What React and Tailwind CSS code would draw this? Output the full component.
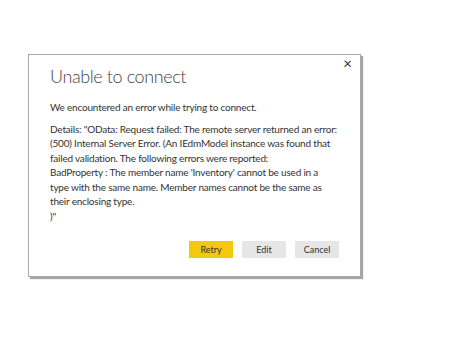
export default function App() {
  return (
    <div className="w-[474px] h-[350px] bg-white overflow-hidden font-['Lato',sans-serif]">
      <div className="relative ml-[28px] mt-[54px] w-[333px] h-[223px] bg-white border border-[#a8a8a8] shadow-[2px_2px_1px_rgba(0,0,0,0.35)] pl-[21px] pr-[20px]">
        <button className="absolute right-[8px] top-[1px] text-[#333] text-[15px] leading-none">
          ×
        </button>
        <h1 className="mt-[9px] text-[18px] font-light text-[#444] leading-[24px] tracking-[-0.4px]">
          Unable to connect
        </h1>
        <p className="mt-[12px] text-[10px] leading-[14.5px] text-[#333] whitespace-nowrap tracking-[-0.2px]">
          We encountered an error while trying to connect.
        </p>
        <p className="mt-[7px] text-[10px] leading-[14.5px] text-[#333] whitespace-nowrap tracking-[-0.2px]">
          Details: "OData: Request failed: The remote server returned an error:
          <br />
          (500) Internal Server Error. (An IEdmModel instance was found that
          <br />
          failed validation. The following errors were reported:
          <br />
          BadProperty : The member name 'Inventory' cannot be used in a
          <br />
          type with the same name. Member names cannot be the same as
          <br />
          their enclosing type.
          <br />)"
        </p>
        <div className="flex justify-end gap-[9px] mt-[18px] pr-[1px]">
          <button className="w-[44px] h-[17px] bg-[#f2c811] text-[9px] text-[#333]">
            Retry
          </button>
          <button className="w-[44px] h-[17px] bg-[#e6e6e6] text-[9px] text-[#333]">
            Edit
          </button>
          <button className="w-[44px] h-[17px] bg-[#e6e6e6] text-[9px] text-[#333]">
            Cancel
          </button>
        </div>
      </div>
    </div>
  );
}
